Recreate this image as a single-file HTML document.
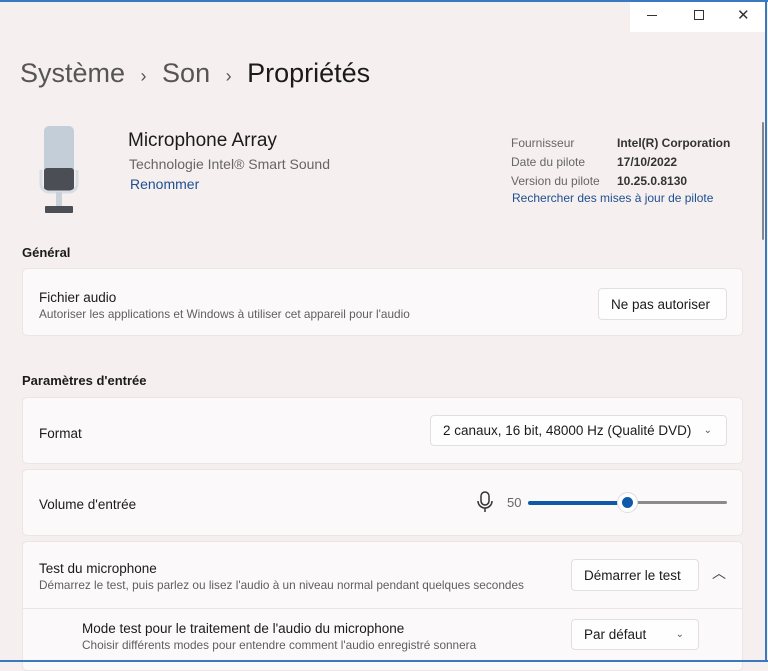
<!DOCTYPE html>
<html><head><style>
*{margin:0;padding:0;box-sizing:border-box}
body{width:768px;height:662px;overflow:hidden;background:#f6efef;font-family:"Liberation Sans",sans-serif;color:#1b1b1b;position:relative}
.a{position:absolute;white-space:nowrap}
.card{position:absolute;left:22px;width:721px;background:#fbf9f9;border:1px solid #ebe5e5;border-radius:5px}
.btn{position:absolute;background:#fefefe;border:1px solid #e3dfdf;border-radius:4px;font-size:13.5px;display:flex;align-items:center;padding-left:12px;color:#1b1b1b}
.t{font-size:13.5px}
.s{font-size:11.8px;color:#5f5f5f}
.bl{z-index:5}
</style></head><body>
<div class="a bl" style="left:0;top:0;width:768px;height:2px;background:#3a78c0"></div>
<div class="a bl" style="left:765px;top:0;width:2px;height:662px;background:#3a78c0"></div>
<div class="a bl" style="left:0;top:660px;width:768px;height:2px;background:#3a78c0"></div>
<div class="a" style="left:630px;top:2px;width:135px;height:30px;background:#fff"></div>
<div class="a" style="left:647px;top:15px;width:10px;height:1px;background:#333"></div>
<div class="a" style="left:694px;top:10px;width:10px;height:10px;border:1px solid #333"></div>
<div class="a" style="left:737px;top:6px;font-size:15px;color:#333">✕</div>
<div class="a" style="left:762px;top:122px;width:2px;height:118px;background:#888;border-radius:1px"></div>

<div class="a" style="left:20px;top:58px;font-size:27px;color:#555">Système <span style="font-size:18px;margin:0 8px">›</span> Son <span style="font-size:18px;margin:0 8px">›</span> <span style="color:#1b1b1b">Propriétés</span></div>

<svg class="a" style="left:38px;top:126px" width="60" height="90"><rect x="6" y="0" width="30" height="65" rx="5" fill="#c3ced8"/><rect x="6" y="42" width="30" height="25" rx="3" fill="#4b4e54"/><path d="M3 44 v14 a8 8 0 0 0 8 8 h20 a8 8 0 0 0 8 -8 v-14" fill="none" stroke="#d7dde3" stroke-width="3"/><rect x="18" y="66" width="6" height="14" fill="#c9d1d9"/><rect x="7" y="80" width="28" height="7" rx="1" fill="#4b4e54"/></svg>

<div class="a" style="left:128px;top:130px;font-size:19px">Microphone Array</div>
<div class="a" style="left:129px;top:156px;font-size:14px;color:#666">Technologie Intel® Smart Sound</div>
<div class="a" style="left:130px;top:176px;font-size:14px;color:#1f4f8f">Renommer</div>

<div class="a" style="left:511px;top:134px;font-size:12px;color:#666;line-height:19px">Fournisseur<br>Date du pilote<br>Version du pilote</div>
<div class="a" style="left:617px;top:134px;font-size:12px;font-weight:bold;color:#333;line-height:19px">Intel(R) Corporation<br>17/10/2022<br>10.25.0.8130</div>
<div class="a" style="left:512px;top:191px;font-size:12px;color:#1f4f8f">Rechercher des mises à jour de pilote</div>

<div class="a" style="left:22px;top:245px;font-size:13px;font-weight:bold">Général</div>
<div class="card" style="top:268px;height:68px">
<div class="a t" style="left:16px;top:21px">Fichier audio</div>
<div class="a s" style="left:16px;top:38px">Autoriser les applications et Windows à utiliser cet appareil pour l'audio</div>
<div class="btn" style="left:575px;top:19px;width:129px;height:32px">Ne pas autoriser</div>
</div>

<div class="a" style="left:22px;top:373px;font-size:13px;font-weight:bold">Paramètres d'entrée</div>
<div class="card" style="top:397px;height:67px">
<div class="a t" style="left:16px;top:28px">Format</div>
<div class="btn" style="left:407px;top:17px;width:297px;height:31px;font-size:13.5px">2 canaux, 16 bit, 48000 Hz (Qualité DVD)<span style="position:absolute;right:14px;font-size:10px;color:#555">⌄</span></div>
</div>
<div class="card" style="top:469px;height:67px">
<div class="a t" style="left:16px;top:27px">Volume d'entrée</div>
<svg class="a" style="left:454px;top:21px" width="16" height="22"><rect x="4" y="1" width="8" height="13" rx="4" fill="none" stroke="#333" stroke-width="1.5"/><path d="M1 10 a7 7 0 0 0 14 0 M8 17 v4" fill="none" stroke="#333" stroke-width="1.5"/></svg>
<div class="a" style="left:484px;top:25px;font-size:13px;color:#666">50</div>
<div class="a" style="left:505px;top:31px;width:100px;height:4px;background:#0f5aa8;border-radius:2px"></div>
<div class="a" style="left:605px;top:31px;width:99px;height:3px;background:#8b8b8b;border-radius:2px"></div>
<div class="a" style="left:594px;top:22px;width:21px;height:21px;border-radius:50%;background:#fff;border:1px solid #ddd"></div>
<div class="a" style="left:599px;top:27px;width:11px;height:11px;border-radius:50%;background:#0f5aa8"></div>
</div>
<div class="card" style="top:541px;height:130px">
<div class="a t" style="left:16px;top:19px">Test du microphone</div>
<div class="a s" style="left:16px;top:36px">Démarrez le test, puis parlez ou lisez l'audio à un niveau normal pendant quelques secondes</div>
<div class="btn" style="left:548px;top:17px;width:128px;height:32px">Démarrer le test</div>
<div class="a" style="left:689px;top:21px;font-size:14px;color:#444">︿</div>
<div class="a" style="left:0;top:66px;width:719px;height:1px;background:#ebe5e5"></div>
<div class="a t" style="left:59px;top:79px">Mode test pour le traitement de l'audio du microphone</div>
<div class="a s" style="left:59px;top:96px">Choisir différents modes pour entendre comment l'audio enregistré sonnera</div>
<div class="btn" style="left:548px;top:77px;width:128px;height:31px">Par défaut<span style="position:absolute;right:14px;font-size:10px;color:#555">⌄</span></div>
</div>
</body></html>
